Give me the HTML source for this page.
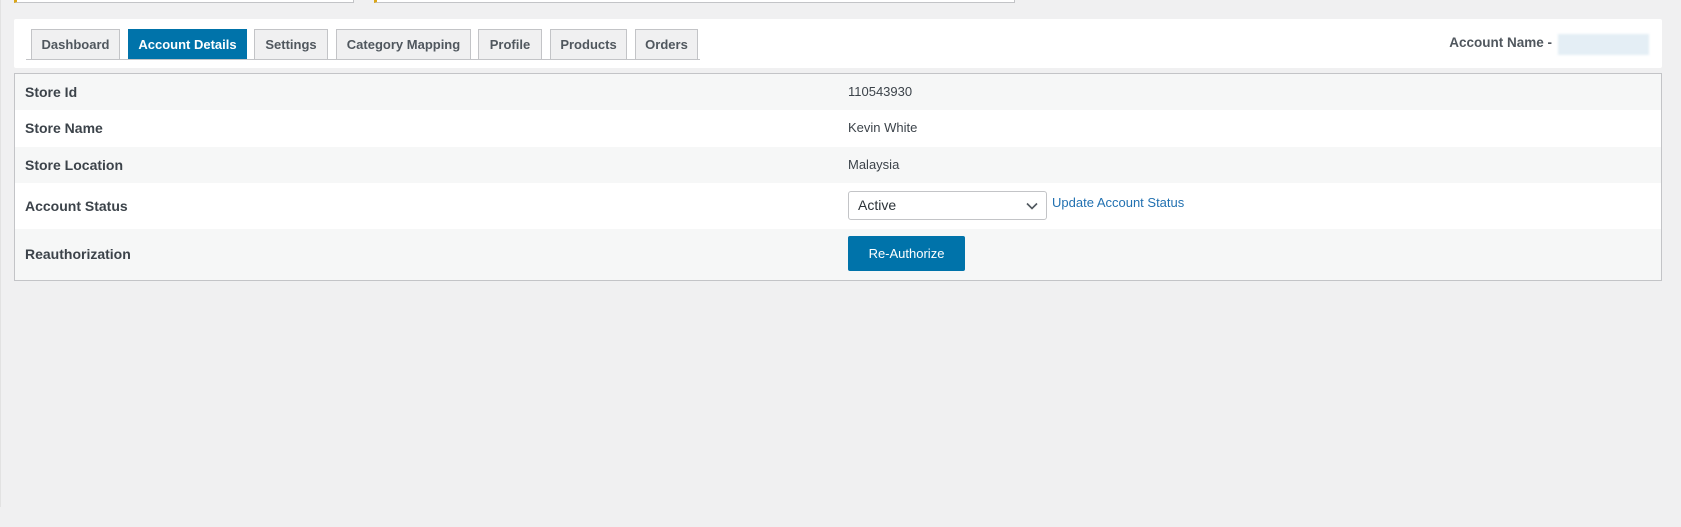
<!DOCTYPE html>
<html><head><style>
body{margin:0;width:1681px;height:527px;background:#f0f0f1;font-family:"Liberation Sans",sans-serif;position:relative;overflow:hidden;color:#3c434a}
.abs{position:absolute}
.box{top:-2px;height:5px;background:#fff;border:1px solid #c3c4c7;border-left:3px solid #dba617;box-sizing:border-box}
.panel{left:14px;top:19px;width:1648px;height:49px;background:#fff;border-radius:2px}
.tab{top:29px;height:30px;box-sizing:border-box;background:#f0f0f1;border:1px solid #c3c4c7;border-bottom:none;font-size:13px;font-weight:bold;color:#50575e;text-align:center;line-height:29px}
.tab.on{background:#0073aa;border-color:#0073aa;color:#fff}
.tbl{left:14px;top:73px;width:1648px;height:208px;border:1px solid #c3c4c7;box-sizing:border-box;background:#fff}
.row{position:absolute;left:0;right:0;font-size:14px}
.row b{position:absolute;left:10px;color:#3c434a}
.row span{position:absolute;left:833px;font-size:13px;color:#3c434a}
.g{background:#f6f7f7}
</style></head><body>
<div class="abs box" style="left:14px;width:340px"></div>
<div class="abs box" style="left:374px;width:641px"></div>
<div class="abs panel"></div>
<div class="abs" style="left:26px;top:59px;width:674px;height:1px;background:#c3c4c7"></div>
<div class="abs tab" style="left:31px;width:89px">Dashboard</div>
<div class="abs tab on" style="left:128px;width:119px">Account Details</div>
<div class="abs tab" style="left:254px;width:74px">Settings</div>
<div class="abs tab" style="left:336px;width:135px">Category Mapping</div>
<div class="abs tab" style="left:478px;width:64px">Profile</div>
<div class="abs tab" style="left:550px;width:77px">Products</div>
<div class="abs tab" style="left:635px;width:63px">Orders</div>
<div class="abs" style="right:129px;top:35px;font-size:13.5px;font-weight:bold;color:#50575e">Account Name -</div>
<div class="abs" style="left:1558px;top:34px;width:91px;height:21px;background:#e4eef5;filter:blur(1px)"></div>
<div class="abs tbl">
<div class="row g" style="top:0;height:36px"><b style="top:10px">Store Id</b><span style="top:10px">110543930</span></div>
<div class="row" style="top:36px;height:37px"><b style="top:10px">Store Name</b><span style="top:10px">Kevin White</span></div>
<div class="row g" style="top:73px;height:36px"><b style="top:10px">Store Location</b><span style="top:10px">Malaysia</span></div>
<div class="row" style="top:109px;height:46px"><b style="top:15px">Account Status</b>
<div class="abs" style="left:833px;top:8px;width:199px;height:29px;border:1px solid #c3c4c7;border-radius:3px;box-sizing:border-box;background:#fff;font-size:14px;line-height:27px;padding-left:9px;color:#2c3338">Active
<svg class="abs" style="right:8px;top:10px" width="12" height="8" viewBox="0 0 12 8"><path d="M1 1.5l5 5 5-5" fill="none" stroke="#50575e" stroke-width="1.6"/></svg></div>
<div class="abs" style="left:1037px;top:12px;font-size:13px;color:#2271b1">Update Account Status</div></div>
<div class="row g" style="top:155px;height:51px"><b style="top:17px">Reauthorization</b>
<div class="abs" style="left:833px;top:7px;width:117px;height:35px;background:#0073aa;border-radius:2px;color:#fff;font-size:13px;text-align:center;line-height:35px">Re-Authorize</div></div>
</div>
<div class="abs" style="left:0;top:0;width:1px;height:507px;background:#e2e2e2"></div>
</body></html>
